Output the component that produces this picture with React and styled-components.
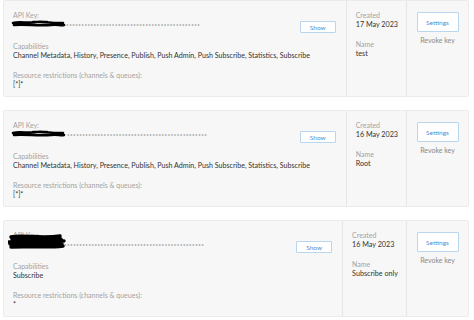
import React from 'react'
import styled, { createGlobalStyle } from 'styled-components'

const GlobalStyle = createGlobalStyle`
  body {
    margin: 0;
    background: #ffffff;
    font-family: Lato, "Open Sans", sans-serif;
    color: #333333;
  }
`

const List = styled.div`
  display: flex;
  flex-direction: column;
  gap: 13px;
  padding: 0 5px 0 3px;
`

const Card = styled.div`
  display: grid;
  grid-template-columns: 1fr auto 62px;
  background: #f7f7f7;
  border: 1px solid #ebebeb;
  border-radius: 2px;
  height: 97px;
  box-sizing: border-box;
  overflow: hidden;
`

const Main = styled.div`
  padding: 10px 10px 0 9px;
  min-width: 0;
`

const Side = styled.div`
  border-left: 1px solid #e6e6e6;
  padding: 10px 8px 0 9px;
  white-space: nowrap;
`

const Actions = styled.div`
  border-left: 1px solid #e6e6e6;
  padding-top: 10px;
  display: flex;
  flex-direction: column;
  align-items: center;
`

const Label = styled.div`
  font-size: 7px;
  line-height: 9px;
  color: #a3a3a3;
  margin-top: ${p => p.$gap || 0}px;
`

const Value = styled.div`
  font-size: ${p => p.$size || 7.1}px;
  line-height: 10px;
  color: #333333;
  white-space: nowrap;
`

const KeyRow = styled.div`
  display: flex;
  align-items: flex-start;
  justify-content: space-between;
  height: 12px;
  margin-top: 1px;
`

const Key = styled.div`
  display: flex;
  align-items: center;
  position: relative;
  height: 8px;
`

const Stars = styled.span`
  font-size: 6px;
  line-height: 8px;
  letter-spacing: 0.5px;
  color: #555555;
  margin-left: ${p => p.$offset}px;
  padding-top: 2px;
`

const Scribble = styled.svg`
  position: absolute;
  left: ${p => p.$x}px;
  top: ${p => p.$y}px;
`

const Button = styled.button`
  font-family: inherit;
  font-size: 6.5px;
  color: #4c8fd0;
  background: #ffffff;
  border: 1px solid #b9d6ee;
  border-radius: 1px;
  padding: 0;
  width: ${p => p.$w}px;
  height: ${p => p.$h}px;
  margin-top: ${p => p.$top || 0}px;
`

const Revoke = styled.div`
  font-size: 7px;
  line-height: 9px;
  color: #8a8a8a;
  margin-top: 4px;
`

function Redaction({ big }) {
  if (big) {
    return (
      <Scribble $x={-5} $y={-8} width="60" height="19" viewBox="0 0 60 19">
        <path d="M3 4 C14 1 30 6 52 3 M1 9 C14 7 34 10 56 8 M3 14 C20 13 40 15 55 13 M4 6 L53 6 M2 11 L54 11" stroke="#000" strokeWidth="3.4" fill="none" strokeLinecap="round" />
      </Scribble>
    )
  }
  return (
    <Scribble $x={-2} $y={-2} width="56" height="10" viewBox="0 0 56 10">
      <path d="M2 4 C10 2 18 5 26 3 C34 2 42 5 52 4 M3 6 C14 5 26 7 40 6 C46 5 50 7 53 6 M22 3 L36 3" stroke="#000" strokeWidth="2.6" fill="none" strokeLinecap="round" />
    </Scribble>
  )
}

const keys = [
  {
    created: '17 May 2023',
    name: 'test',
    caps: 'Channel Metadata, History, Presence, Publish, Push Admin, Push Subscribe, Statistics, Subscribe',
    res: '[*]*',
    offset: 47,
  },
  {
    created: '16 May 2023',
    name: 'Root',
    caps: 'Channel Metadata, History, Presence, Publish, Push Admin, Push Subscribe, Statistics, Subscribe',
    res: '[*]*',
    offset: 54,
  },
  {
    created: '16 May 2023',
    name: 'Subscribe only',
    caps: 'Subscribe',
    res: '*',
    offset: 51,
    big: true,
  },
]

const STARS = '*'.repeat(46)

function KeyCard({ k }) {
  return (
    <Card>
      <Main>
        <Label>API Key:</Label>
        <KeyRow>
          <Key>
            <Redaction big={k.big} />
            <Stars $offset={k.offset}>{STARS}</Stars>
          </Key>
          <Button $w={36} $h={12}>Show</Button>
        </KeyRow>
        <Label $gap={9}>Capabilities</Label>
        <Value>{k.caps}</Value>
        <Label $gap={10}>Resource restrictions (channels &amp; queues):</Label>
        <Value>{k.res}</Value>
      </Main>
      <Side>
        <Label>Created</Label>
        <Value $size={7.2}>{k.created}</Value>
        <Label $gap={10}>Name</Label>
        <Value $size={7.2}>{k.name}</Value>
      </Side>
      <Actions>
        <Button $w={42} $h={20} $top={1}>Settings</Button>
        <Revoke>Revoke key</Revoke>
      </Actions>
    </Card>
  )
}

export default function App() {
  return (
    <>
      <GlobalStyle />
      <List>
        {keys.map((k, i) => (
          <KeyCard key={i} k={k} />
        ))}
      </List>
    </>
  )
}
